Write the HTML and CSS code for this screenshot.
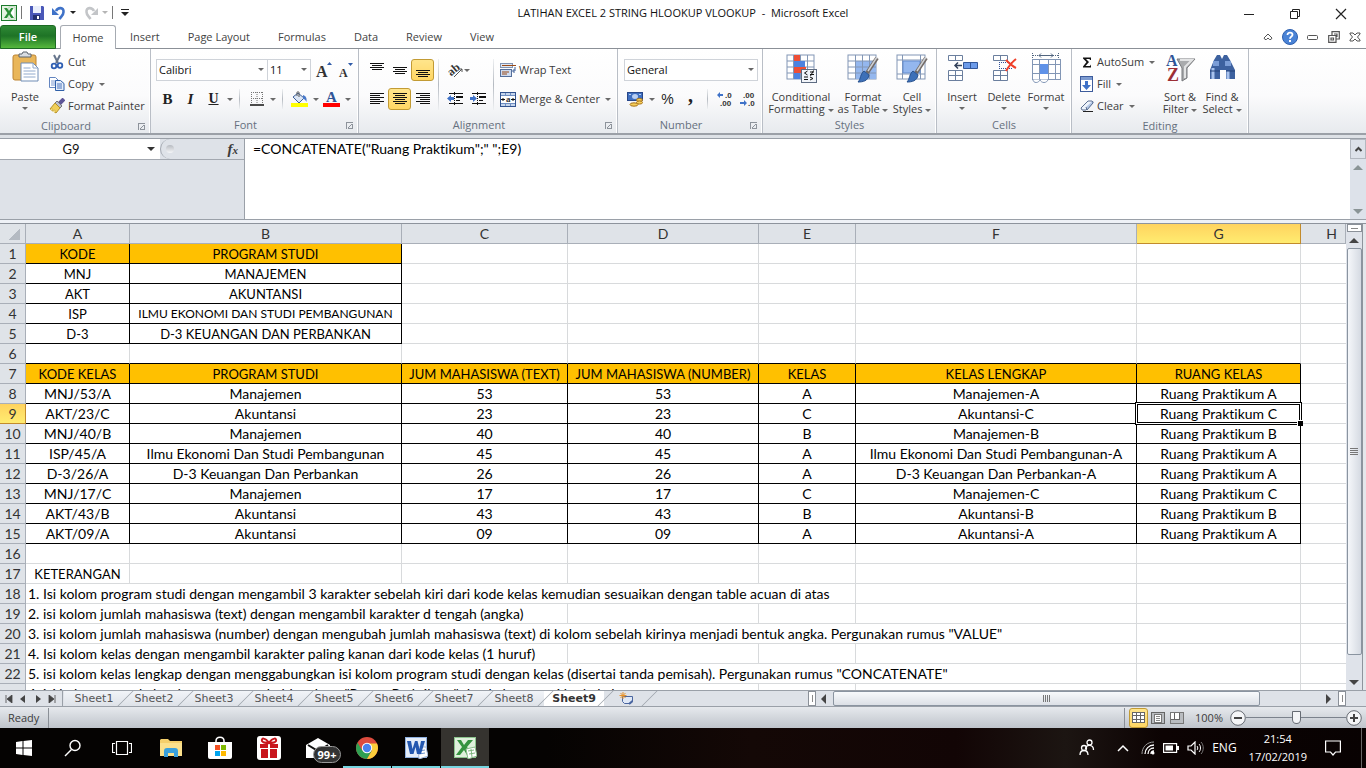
FILE: index.html
```html
<!DOCTYPE html>
<html lang="en">
<head>
<meta charset="utf-8">
<title>LATIHAN EXCEL 2 STRING HLOOKUP VLOOKUP - Microsoft Excel</title>
<link rel="stylesheet" href="styles.css">
</head>
<body>
<div class="app">

<header class="titlebar">
  <div class="quick">
    <svg class="qa-logo" width="16" height="16" viewBox="0 0 16 16"><rect x=".5" y=".5" width="15" height="15" fill="#e6f3e3" stroke="#1d7a2c"/><rect x="8" y="2" width="6" height="12" fill="#fff" stroke="#8fc191" stroke-width=".6"/><path d="M3 3h3l2 3 2-3h2.500L9.500 8l3.500 5h-3l-2-3.500L6 13H3l3.500-5z" fill="#2c8f38"/></svg>
    <i class="bar"></i>
    <button class="qa" aria-label="Save"><svg width="14" height="14" viewBox="0 0 14 14"><path d="M0 0h13l1 1v13H0z" fill="#4a58b8"/><rect x="3" y="0" width="8" height="7" fill="#e9eefb"/><rect x="3" y="9" width="7" height="5" fill="#23306f"/><rect x="7" y="10" width="2" height="3" fill="#fff"/></svg></button>
    <button class="qa" aria-label="Undo"><svg width="14" height="14" viewBox="0 0 14 14"><path d="M4 5C6 1 12 1 11.500 6c0 3-2 4-4 7" fill="none" stroke="#3f72c8" stroke-width="2.600"/><path d="M0 2v7h7z" fill="#3f72c8"/></svg></button>
    <i class="caret dark"></i>
    <button class="qa" aria-label="Redo"><svg width="14" height="14" viewBox="0 0 14 14"><path d="M10 5C8 1 2 1 2.500 6c0 3 2 4 4 7" fill="none" stroke="#c3c5c8" stroke-width="2.600"/><path d="M14 2v7H7z" fill="#c3c5c8"/></svg></button>
    <i class="caret pale"></i>
    <i class="bar"></i>
    <button class="qa-more" aria-label="Customize toolbar"><svg width="8" height="7" viewBox="0 0 8 7"><path d="M0 .5h8" stroke="#222"/><path d="M0 3h8L4 7z" fill="#222"/></svg></button>
  </div>
  <h1 class="title">LATIHAN EXCEL 2 STRING HLOOKUP VLOOKUP&nbsp; -&nbsp; Microsoft Excel</h1>
  <div class="win">
    <button aria-label="Minimize"><svg width="12" height="12" viewBox="0 0 12 12"><path d="M1 6.500h10" stroke="#222"/></svg></button>
    <button aria-label="Restore"><svg width="12" height="12" viewBox="0 0 12 12"><path d="M1.500 3.500h7v7h-7zM3.500 3V1.500h7v7H9" fill="none" stroke="#222"/></svg></button>
    <button aria-label="Close"><svg width="12" height="12" viewBox="0 0 12 12"><path d="M1 1l10 10M11 1L1 11" stroke="#222" stroke-width="1.200"/></svg></button>
  </div>
</header>

<nav class="tabs">
  <button class="tab file">File</button>
  <button class="tab home">Home</button>
  <button class="tab">Insert</button>
  <button class="tab">Page Layout</button>
  <button class="tab">Formulas</button>
  <button class="tab">Data</button>
  <button class="tab">Review</button>
  <button class="tab">View</button>
  <div class="tabs-right">
    <button aria-label="Collapse ribbon"><svg width="10" height="8" viewBox="0 0 10 8"><path d="M1 5l4-4 4 4-1 1.500H6.500L5 5 3.500 6.500H2z" fill="#fff" stroke="#555"/></svg></button>
    <button aria-label="Help"><svg width="16" height="16" viewBox="0 0 16 16"><circle cx="8" cy="8" r="7.500" fill="#4a83d6" stroke="#2d5fae"/><path d="M5.500 6c0-3.300 5-3 5-.2 0 1.700-2.500 1.700-2.500 4" fill="none" stroke="#fff" stroke-width="1.800"/><rect x="7" y="11" width="2" height="2" fill="#fff"/></svg></button>
    <button aria-label="Minimize workbook"><svg width="12" height="8" viewBox="0 0 12 8"><rect x=".5" y="2.500" width="10" height="4" rx="1" fill="#fff" stroke="#555"/></svg></button>
    <button aria-label="Restore workbook"><svg width="12" height="12" viewBox="0 0 12 12"><path d="M4 4V.7h7.300V8H8M.7 4.500H8v6.800H.7zM3 7h2.500v2H3zM6 3h3v3" fill="none" stroke="#555" stroke-width="1.200"/></svg></button>
    <button aria-label="Close workbook"><svg width="12" height="10" viewBox="0 0 12 10"><path d="M1 1h3l2 2 2-2h3v1L8.500 5 11 8v1H8L6 7 4 9H1V8l2.500-3L1 2z" fill="#fff" stroke="#555"/></svg></button>
  </div>
</nav>

<section class="ribbon">
  <div class="group g-clip">
    <div class="body">
      <button class="big"><svg width="28" height="32" viewBox="0 0 28 32"><rect x="2" y="4" width="23" height="25" rx="2" fill="#e9b65a" stroke="#bd8433"/><path d="M8 6V3h3l1-2h4l1 2h3v3z" fill="#d9dde2" stroke="#5d646d"/><path d="M10 12h12l5 5v13H10z" fill="#fff" stroke="#6f8cb5"/><path d="M22 12v5h5M12.500 17h7M12.500 20h12M12.500 23h12M12.500 26h12" fill="none" stroke="#90a9cc"/></svg><span>Paste</span><i class="caret"></i></button>
      <div class="col">
        <button class="row"><svg width="16" height="16" viewBox="0 0 16 16"><path d="M5 1l4 8M11 1L7 9" stroke="#66758c" stroke-width="2"/><circle cx="5" cy="12" r="2.300" fill="none" stroke="#2f5fb3" stroke-width="1.800"/><circle cx="11" cy="11.500" r="2.300" fill="none" stroke="#2f5fb3" stroke-width="1.800"/></svg>Cut</button>
        <button class="row"><svg width="16" height="16" viewBox="0 0 16 16"><path d="M.5 1.500h6l3 3v7h-9z" fill="#fff" stroke="#6385c0"/><path d="M2 5h5M2 7h4M2 9h4" stroke="#7c9ad0"/><path d="M6.500 4.500h5l3.500 3v7H6.500z" fill="#e5edf9" stroke="#2f5fa8"/><path d="M8 8h5M8 10h5M8 12h5" stroke="#4a75be"/></svg>Copy<i class="caret"></i></button>
        <button class="row"><svg width="16" height="16" viewBox="0 0 16 16"><path d="M15 1l-5 5" stroke="#5e5597" stroke-width="4"/><path d="M8 3l5 5-2 2-5-5z" fill="#b9bed0" stroke="#777"/><path d="M6 5l5 5-4 5-6-4z" fill="#f0cf59" stroke="#b28f2a"/><path d="M1 11l3 0-1 2 3-1 0 3" fill="#fff3a8" stroke="#caa53a" stroke-width=".6"/></svg>Format Painter</button>
      </div>
    </div>
    <div class="label">Clipboard<button class="launch" aria-label="Clipboard options"></button></div>
  </div>

  <div class="group g-font">
    <div class="body rows">
      <div class="line">
        <span class="combo c-font"><select aria-label="Font"><option>Calibri</option></select></span><span class="combo c-size"><select aria-label="Font size"><option>11</option></select></span>
        <button class="tool grow" aria-label="Grow font"><svg width="18" height="18" viewBox="0 0 18 18"><text x="1" y="16" class="serif" font-size="16">A</text><path d="M12 4l2.500-3L17 4z" fill="#2f5ba8"/></svg></button>
        <button class="tool grow" aria-label="Shrink font"><svg width="18" height="18" viewBox="0 0 18 18"><text x="3" y="16" class="serif" font-size="12">A</text><path d="M12 2h5l-2.500 3z" fill="#2f5ba8"/></svg></button>
      </div>
      <div class="line">
        <button class="tool serif-b">B</button><button class="tool serif-i">I</button><button class="tool serif-u">U</button><button class="drop" aria-label="Underline style"><i class="caret"></i></button><i class="sep"></i>
        <button class="tool" aria-label="Borders"><svg width="14" height="14" viewBox="0 0 14 14"><path d="M1.500 0v12M7 0v12M12.500 0v12M1 .5h12M1 6.500h12" stroke="#777" stroke-dasharray="1 1"/><path d="M0 13h14" stroke="#111" stroke-width="1.500"/></svg></button><button class="drop" aria-label="Border style"><i class="caret"></i></button><i class="sep"></i>
        <button class="tool wide" aria-label="Fill color"><svg width="17" height="16" viewBox="0 0 17 16"><path d="M2 6l5-4 6 5-5 5z" fill="#dbe5f4" stroke="#3d5f99"/><path d="M6 5V1.500c0-1 2-1 2 0V6" fill="none" stroke="#555"/><path d="M12 4c3 1 4 3 3.500 7-1-2-2-3-3.500-3z" fill="#4979c9"/><rect y="12" width="17" height="4" fill="#ff0"/></svg></button><button class="drop" aria-label="Fill palette"><i class="caret"></i></button>
        <button class="tool wide" aria-label="Font color"><svg width="17" height="16" viewBox="0 0 17 16"><text x="3" y="11" class="serif blue" font-size="15">A</text><rect y="12" width="17" height="4" fill="#f00"/></svg></button><button class="drop" aria-label="Font palette"><i class="caret"></i></button>
      </div>
    </div>
    <div class="label">Font<button class="launch" aria-label="Font options"></button></div>
  </div>

  <div class="group g-align">
    <div class="body">
      <div class="al-grid">
        <button class="tool" aria-label="Top align"><svg width="14" height="14" viewBox="0 0 14 14"><path d="M0 .5h14M2 2.500h10M0 4.500h14M2 6.500h10" stroke="#111"/></svg></button>
        <button class="tool" aria-label="Middle align"><svg width="14" height="14" viewBox="0 0 14 14"><path d="M0 4.500h14M2 6.500h10M0 8.500h14M2 10.500h10" stroke="#111"/></svg></button>
        <button class="tool on" aria-label="Bottom align"><svg width="14" height="14" viewBox="0 0 14 14"><path d="M0 7.500h14M2 9.500h10M0 11.500h14M2 13.500h10" stroke="#111"/></svg></button>
        <button class="tool" aria-label="Align left"><svg width="14" height="14" viewBox="0 0 14 14"><path d="M0 1.500h14M0 3.500h10M0 5.500h14M0 7.500h10M0 9.500h14M0 11.500h10" stroke="#111"/></svg></button>
        <button class="tool on" aria-label="Center"><svg width="14" height="14" viewBox="0 0 14 14"><path d="M0 1.500h14M2 3.500h10M0 5.500h14M2 7.500h10M0 9.500h14M2 11.500h10" stroke="#111"/></svg></button>
        <button class="tool" aria-label="Align right"><svg width="14" height="14" viewBox="0 0 14 14"><path d="M0 1.500h14M4 3.500h10M0 5.500h14M4 7.500h10M0 9.500h14M4 11.500h10" stroke="#111"/></svg></button>
      </div>
      <i class="sep tall"></i>
      <div class="al-mid">
        <button class="tool orient" aria-label="Orientation"><svg width="16" height="16" viewBox="0 0 16 16"><text x="0" y="12" class="serif" font-size="12" transform="rotate(-40 5 9)">ab</text><path d="M6 15L14 7M14 7h-3M14 7v3" stroke="#555" fill="none"/></svg><i class="caret"></i></button>
        <div class="indents">
          <button class="tool" aria-label="Decrease indent"><svg width="16" height="14" viewBox="0 0 16 14"><path d="M7.500 0v14" stroke="#111" stroke-dasharray="1 1"/><path d="M2 1.500h14M9 4.500h7M9 5.500h7M9 8.500h4M2 11.500h14" stroke="#111"/><path d="M0 6.500L4 3v2h3v3H4v2z" fill="#3f72c8"/></svg></button>
          <button class="tool" aria-label="Increase indent"><svg width="16" height="14" viewBox="0 0 16 14"><path d="M7.500 0v14" stroke="#111" stroke-dasharray="1 1"/><path d="M2 1.500h14M9 4.500h7M9 5.500h7M9 8.500h4M2 11.500h14" stroke="#111"/><path d="M7 6.500L3 3v2H0v3h3v2z" fill="#3f72c8"/></svg></button>
        </div>
      </div>
      <i class="sep tall"></i>
      <div class="al-wrap">
        <button class="row"><svg width="16" height="16" viewBox="0 0 16 16"><rect x=".5" y="1.500" width="12" height="4" fill="#dfe7f3" stroke="#8194b3"/><path d="M2 3.500h14" stroke="#9a4a18"/><rect x=".5" y="7.500" width="11" height="7" fill="#cfdcf0" stroke="#556f9c"/><path d="M2 10h7M2 12h5" stroke="#9a4a18"/><path d="M15 5v4h-2M14.500 7l-2 2 2 2" fill="none" stroke="#3d5f99"/></svg>Wrap Text</button>
        <button class="row"><svg width="16" height="15" viewBox="0 0 16 15"><rect x=".5" y=".5" width="15" height="14" fill="#6f8ec2" stroke="#32538f"/><path d="M1 1h4v2H1zM6 1h4v2H6zM11 1h4v2h-4zM1 12h4v2H1zM6 12h4v2H6zM11 12h4v2h-4z" fill="#c5d5ec"/><rect x="1" y="4" width="14" height="7" fill="#fff"/><path d="M1 7.500h4M11 7.500h4M3 6v3M13 6v3" stroke="#111"/><text x="6" y="10" class="serif" font-size="9">a</text></svg>Merge &amp; Center<i class="caret"></i></button>
      </div>
    </div>
    <div class="label">Alignment<button class="launch" aria-label="Alignment options"></button></div>
  </div>

  <div class="group g-num">
    <div class="body rows">
      <div class="line"><span class="combo c-num"><select aria-label="Number format"><option>General</option></select></span></div>
      <div class="line">
        <button class="tool" aria-label="Currency"><svg width="17" height="16" viewBox="0 0 17 16"><rect x=".5" y="1.500" width="15" height="8" fill="#3f6fc0" stroke="#28478a"/><ellipse cx="8" cy="5.500" rx="3" ry="2.500" fill="#b9cff2"/><path d="M2 3.500h2M12 3.500h2" stroke="#b9cff2"/><ellipse cx="12.500" cy="9" rx="3" ry="1.600" fill="#f5ce5a" stroke="#a9741b"/><ellipse cx="12.500" cy="11.500" rx="3" ry="1.600" fill="#f5ce5a" stroke="#a9741b"/><ellipse cx="7" cy="13.500" rx="4" ry="1.700" fill="#f5ce5a" stroke="#a9741b"/></svg></button><button class="drop" aria-label="Currency formats"><i class="caret"></i></button>
        <button class="tool pct">%</button><button class="tool comma">,</button><i class="sep"></i>
        <button class="tool" aria-label="Increase decimal"><svg width="18" height="14" viewBox="0 0 18 14"><text x="9" y="6" class="dec">.0</text><text x="4" y="14" class="dec">.00</text><path d="M1 3l3-3v2h3v2H4v2z" fill="#3f72c8"/></svg></button>
        <button class="tool" aria-label="Decrease decimal"><svg width="18" height="14" viewBox="0 0 18 14"><text x="4" y="6" class="dec">.00</text><text x="9" y="14" class="dec">.0</text><path d="M8 11L5 8v2H1v2h4v2z" fill="#3f72c8"/></svg></button>
      </div>
    </div>
    <div class="label">Number<button class="launch" aria-label="Number options"></button></div>
  </div>

  <div class="group g-styles">
    <div class="body">
      <button class="big b-cond"><svg width="32" height="32" viewBox="0 0 32 32"><rect x="2" y="4" width="27" height="24" fill="#fff" stroke="#8296b5"/><path d="M2 10h27M2 16h27M2 22h27M8.500 4v24M15.500 4v24M22.500 4v24" stroke="#8296b5"/><path d="M9 4h6v6H9zM9 16h12v6H9z" fill="#ee4e35"/><path d="M9 10h11v6H9zM9 22h6v6H9z" fill="#4c82e0"/><rect x="16.500" y="18.500" width="15" height="13" fill="#f2f5fa" stroke="#5e6c82"/><path d="M22.500 20l-3 2 3 2M19 26h4M25 21h4M25 23.500h4M28.500 19.500l-3 5.500M25 26l3 1.500-3 1.500M19 28.500h4" fill="none" stroke="#111"/></svg><span>Conditional<br>Formatting <i class="caret"></i></span></button>
      <button class="big b-fmt"><svg width="32" height="32" viewBox="0 0 32 32"><rect x="1" y="4" width="28" height="24" fill="#fff" stroke="#8296b5"/><path d="M8 10h21v18H8z" fill="#94b7ee"/><path d="M1 10h28M1 16h28M1 22h28M8.500 4v24M15.500 4v24M22.500 4v24" stroke="#8296b5"/><path d="M30 7L20 22" stroke="#736b67" stroke-width="4"/><path d="M30 6L21 20" stroke="#cfd2d6" stroke-width="1.500"/><path d="M17 20l5 4c-1 6-6 7-11 7 3-3 2-8 6-11z" fill="#3d70b8" stroke="#28528f"/></svg><span>Format<br>as Table <i class="caret"></i></span></button>
      <button class="big b-cell"><svg width="32" height="32" viewBox="0 0 32 32"><rect x="1" y="4" width="28" height="24" fill="#fff" stroke="#8296b5"/><path d="M1 9h28M1 23h28M6.500 4v24M24.500 4v24" stroke="#8296b5"/><path d="M7 10h17v12H7z" fill="#94b7ee" stroke="#648dce"/><path d="M30 7L20 22" stroke="#736b67" stroke-width="4"/><path d="M30 6L21 20" stroke="#cfd2d6" stroke-width="1.500"/><path d="M17 20l5 4c-1 6-6 7-11 7 3-3 2-8 6-11z" fill="#3d70b8" stroke="#28528f"/></svg><span>Cell<br>Styles <i class="caret"></i></span></button>
    </div>
    <div class="label">Styles</div>
  </div>

  <div class="group g-cells">
    <div class="body">
      <button class="big"><svg width="32" height="32" viewBox="0 0 32 32"><path d="M2.500 4.500h14v5h-14zM9.500 4.500v5M2.500 19.500h14v10h-14zM9.500 19.500v10M2.500 24.500h14" fill="#fff" stroke="#6b7f9e"/><path d="M17.500 11.500h14v6h-14zM24.500 11.500v6" fill="#6c9bea" stroke="#32579b"/><path d="M9 14.500h7M12 11.500l-3 3 3 3" fill="none" stroke="#33415a" stroke-width="1.500"/></svg><span>Insert</span><i class="caret"></i></button>
      <button class="big"><svg width="32" height="32" viewBox="0 0 32 32"><path d="M5.500 4.500h14v5h-14zM12.500 4.500v5M5.500 19.500h14v10h-14zM12.500 19.500v10M5.500 24.500h14" fill="#fff" stroke="#6b7f9e"/><path d="M11 11.500h14M11 17.500h14M11.500 11v7" stroke="#33539a" stroke-dasharray="1 1"/><path d="M18 9c3 3 6 6 10 8M28 8c-4 3-7 7-10 12" fill="none" stroke="#f0402a" stroke-width="2"/></svg><span>Delete</span><i class="caret"></i></button>
      <button class="big"><svg width="32" height="32" viewBox="0 0 32 32"><path d="M2.500 2v5M28.500 2v5M3 4.500h26" stroke="#51657f" stroke-dasharray="1 1"/><path d="M9 4.500h14M11 2.500l-2 2 2 2M21 2.500l2 2-2 2" fill="none" stroke="#51657f"/><rect x="2.500" y="8.500" width="28" height="20" fill="#fff" stroke="#8296b5"/><path d="M2 13.500h28M2 22.500h28M9.500 9v19M18.500 9v19M25.500 9v19" stroke="#8296b5"/><rect x="10" y="13" width="8" height="10" fill="#5f92e8"/><path d="M3 28.500c0 4 6 4 7 0 1 4 7 4 8 0" fill="#fff" stroke="#8296b5"/></svg><span>Format</span><i class="caret"></i></button>
    </div>
    <div class="label">Cells</div>
  </div>

  <div class="group g-edit">
    <div class="body">
      <div class="col">
        <button class="row"><svg width="14" height="16" viewBox="0 0 14 16"><path d="M3 3.500h8V6H10L9.500 5H6l3 3-3.500 4H10l1-1.500V13.500H3v-1L6.500 8 3 4.500z" fill="#111"/></svg>AutoSum<i class="caret"></i></button>
        <button class="row"><svg width="14" height="16" viewBox="0 0 14 16"><rect x=".5" y=".5" width="12" height="15" fill="#fff" stroke="#3d5c9c"/><rect x="1" y="1" width="11" height="3" fill="#7d9bd0"/><path d="M5 5h3v4h3l-4.500 5L2 9h3z" fill="#3f72c8"/></svg>Fill<i class="caret"></i></button>
        <button class="row"><svg width="14" height="16" viewBox="0 0 14 16"><path d="M1 10l7-7h4l1 2-7 7H2z" fill="#eef3fb" stroke="#5a6f92"/><path d="M6 9l1 3 6-7-.5-2" fill="#b6c9e8" stroke="#5a6f92"/><path d="M3 13.500h10" stroke="#222"/></svg>Clear<i class="caret"></i></button>
      </div>
      <button class="big"><svg width="32" height="32" viewBox="0 0 32 32"><path d="M13 8h18l-8 9v10l-5 3V17z" fill="#a9abad" stroke="#77797c"/><path d="M16 9h12l-7 7v11" fill="none" stroke="#e3e4e5" stroke-width="2"/><text x="2" y="15" class="serif blue" font-size="16">A</text><text x="3" y="30" class="serif red" font-size="18">Z</text></svg><span>Sort &amp;<br>Filter <i class="caret"></i></span></button>
      <button class="big"><svg width="32" height="32" viewBox="0 0 32 32"><path d="M8 9l3-5h3l2 4 2-4h3l3 5 5 10v9h-9v-9h-6v9H4v-9z" fill="#3d619f"/><path d="M7 10h6v5H7zM19 10h6v5h-6z" fill="#7b9dd6"/><path d="M7 17v11M22 20v8" stroke="#a9c3ee" stroke-width="3"/><path d="M4 20h10M20 20h9" stroke="#254379"/></svg><span>Find &amp;<br>Select <i class="caret"></i></span></button>
    </div>
    <div class="label">Editing</div>
  </div>
</section>

<section class="formula">
  <div class="fx-left">
    <div class="fx-top">
      <input class="namebox" aria-label="Name box" value="G9">
      <button class="name-drop" aria-label="Names"><i class="caret big-caret"></i></button>
      <div class="fx-tools"><i class="knob"></i><button class="fx" aria-label="Insert function"><em>f</em><sub>x</sub></button></div>
    </div>
  </div>
  <textarea class="fx-text" aria-label="Formula" spellcheck="false">=CONCATENATE("Ruang Praktikum";" ";E9)</textarea>
  <div class="fx-scroll">
    <button class="fx-exp" aria-label="Collapse formula bar"><svg width="7" height="6" viewBox="0 0 7 6"><path d="M.5 5l3-3 3 3" fill="none" stroke="#444" stroke-width="2"/></svg></button>
    <i class="tri up mute"></i><i class="fill"></i><i class="tri down mute"></i>
  </div>
</section>
<div class="divider"></div>

<main class="work">
  <div class="sheet">
    <table class="grid">
      <colgroup><col class="w-n"><col class="w-a"><col class="w-b"><col class="w-c"><col class="w-d"><col class="w-e"><col class="w-f"><col class="w-g"><col></colgroup>
      <thead><tr><th class="corner"></th><th>A</th><th>B</th><th>C</th><th>D</th><th>E</th><th>F</th><th class="sel">G</th><th class="last">H</th></tr></thead>
      <tbody>
        <tr class="b2 caps"><th>1</th><td class="h">KODE</td><td class="h">PROGRAM STUDI</td><td></td><td></td><td></td><td></td><td></td><td></td></tr>
        <tr class="b2 caps"><th>2</th><td>MNJ</td><td>MANAJEMEN</td><td></td><td></td><td></td><td></td><td></td><td></td></tr>
        <tr class="b2 caps"><th>3</th><td>AKT</td><td>AKUNTANSI</td><td></td><td></td><td></td><td></td><td></td><td></td></tr>
        <tr class="b2 caps"><th>4</th><td>ISP</td><td class="long">ILMU EKONOMI DAN STUDI PEMBANGUNAN</td><td></td><td></td><td></td><td></td><td></td><td></td></tr>
        <tr class="b2 caps"><th>5</th><td>D-3</td><td>D-3 KEUANGAN DAN PERBANKAN</td><td></td><td></td><td></td><td></td><td></td><td></td></tr>
        <tr class="pre"><th>6</th><td></td><td></td><td></td><td></td><td></td><td></td><td></td><td></td></tr>
        <tr class="b7 head caps"><th>7</th><td>KODE KELAS</td><td>PROGRAM STUDI</td><td>JUM MAHASISWA (TEXT)</td><td>JUM MAHASISWA (NUMBER)</td><td>KELAS</td><td>KELAS LENGKAP</td><td>RUANG KELAS</td><td></td></tr>
        <tr class="b7"><th>8</th><td>MNJ/53/A</td><td>Manajemen</td><td>53</td><td>53</td><td>A</td><td>Manajemen-A</td><td>Ruang Praktikum A</td><td></td></tr>
        <tr class="b7"><th class="sel">9</th><td>AKT/23/C</td><td>Akuntansi</td><td>23</td><td>23</td><td>C</td><td>Akuntansi-C</td><td class="active">Ruang Praktikum C</td><td></td></tr>
        <tr class="b7"><th>10</th><td>MNJ/40/B</td><td>Manajemen</td><td>40</td><td>40</td><td>B</td><td>Manajemen-B</td><td>Ruang Praktikum B</td><td></td></tr>
        <tr class="b7"><th>11</th><td>ISP/45/A</td><td>Ilmu Ekonomi Dan Studi Pembangunan</td><td>45</td><td>45</td><td>A</td><td>Ilmu Ekonomi Dan Studi Pembangunan-A</td><td>Ruang Praktikum A</td><td></td></tr>
        <tr class="b7"><th>12</th><td>D-3/26/A</td><td>D-3 Keuangan Dan Perbankan</td><td>26</td><td>26</td><td>A</td><td>D-3 Keuangan Dan Perbankan-A</td><td>Ruang Praktikum A</td><td></td></tr>
        <tr class="b7"><th>13</th><td>MNJ/17/C</td><td>Manajemen</td><td>17</td><td>17</td><td>C</td><td>Manajemen-C</td><td>Ruang Praktikum C</td><td></td></tr>
        <tr class="b7"><th>14</th><td>AKT/43/B</td><td>Akuntansi</td><td>43</td><td>43</td><td>B</td><td>Akuntansi-B</td><td>Ruang Praktikum B</td><td></td></tr>
        <tr class="b7"><th>15</th><td>AKT/09/A</td><td>Akuntansi</td><td>09</td><td>09</td><td>A</td><td>Akuntansi-A</td><td>Ruang Praktikum A</td><td></td></tr>
        <tr><th>16</th><td></td><td></td><td></td><td></td><td></td><td></td><td></td><td></td></tr>
        <tr class="caps"><th>17</th><td>KETERANGAN</td><td></td><td></td><td></td><td></td><td></td><td></td><td></td></tr>
        <tr><th>18</th><td colspan="5" class="note">1. Isi kolom program studi dengan mengambil 3 karakter sebelah kiri dari kode kelas kemudian sesuaikan dengan table acuan di atas</td><td></td><td></td><td></td></tr>
        <tr><th>19</th><td colspan="3" class="note">2. isi kolom jumlah mahasiswa (text) dengan mengambil karakter d tengah (angka)</td><td></td><td></td><td></td><td></td><td></td></tr>
        <tr><th>20</th><td colspan="6" class="note">3. isi kolom jumlah mahasiswa (number) dengan mengubah jumlah mahasiswa (text) di kolom sebelah kirinya menjadi bentuk angka. Pergunakan rumus "VALUE"</td><td></td><td></td></tr>
        <tr><th>21</th><td colspan="3" class="note">4. Isi kolom kelas dengan mengambil karakter paling kanan dari kode kelas (1 huruf)</td><td></td><td></td><td></td><td></td><td></td></tr>
        <tr><th>22</th><td colspan="6" class="note">5. isi kolom kelas lengkap dengan menggabungkan isi kolom program studi dengan kelas (disertai tanda pemisah). Pergunakan rumus "CONCATENATE"</td><td></td><td></td></tr>
        <tr><th></th><td colspan="4" class="note">6. isi kolom ruang kelas dengan menambahkan kata "Ruang Praktikum" dan kelas sesuai kode kelas</td><td></td><td></td><td></td><td></td></tr>
      </tbody>
    </table>
  </div>
  <div class="vscroll">
    <i class="split-h"></i><i class="tri up"></i><i class="thumb-v"></i><i class="tri down"></i>
  </div>
</main>

<div class="bottom">
  <div class="navs">
    <button aria-label="First sheet"><svg width="8" height="8" viewBox="0 0 8 8"><path d="M1 0v8M7 0v8L2 4z" fill="#444" stroke="#444" stroke-width=".8"/></svg></button>
    <button aria-label="Previous sheet"><svg width="8" height="8" viewBox="0 0 8 8"><path d="M6 0v8L1 4z" fill="#444"/></svg></button>
    <button aria-label="Next sheet"><svg width="8" height="8" viewBox="0 0 8 8"><path d="M2 0v8l5-4z" fill="#444"/></svg></button>
    <button aria-label="Last sheet"><svg width="8" height="8" viewBox="0 0 8 8"><path d="M7 0v8M1 0v8l5-4z" fill="#444" stroke="#444" stroke-width=".8"/></svg></button>
  </div>
  <div class="stabs">
    <button>Sheet1</button><button>Sheet2</button><button>Sheet3</button><button>Sheet4</button><button>Sheet5</button><button>Sheet6</button><button>Sheet7</button><button>Sheet8</button><button class="cur">Sheet9</button>
    <button class="new" aria-label="Insert worksheet"><svg width="14" height="13" viewBox="0 0 14 13"><path d="M3.500 4.500h10v5l-2 2h-6l-2-2z" fill="#dfe8f6" stroke="#4a66a0"/><path d="M10 12l3.500-3" stroke="#4a66a0" stroke-width="2"/><path d="M4 0v7M.5 3.500h7M1.500 1l5 5M6.500 1l-5 5" stroke="#e8932a"/></svg></button>
  </div>
  <div class="hscroll">
    <i class="split-v"></i><i class="tri left"></i>
    <i class="thumb-h"></i><i class="fill"></i>
    <i class="tri right"></i><i class="split-v"></i>
  </div>
  <i class="bend"></i>
</div>

<footer class="status">
  <span class="ready">Ready</span><i class="fill"></i>
  <div class="views">
    <button class="on" aria-label="Normal"><svg width="13" height="11" viewBox="0 0 13 11"><rect x=".5" y=".5" width="12" height="10" fill="#fff" stroke="#666"/><path d="M0 3.500h13M0 7.500h13M4.500 0v11M8.500 0v11" stroke="#666"/></svg></button>
    <button aria-label="Page layout"><svg width="14" height="12" viewBox="0 0 14 12"><rect x=".5" y=".5" width="13" height="11" fill="#b9bcc0" stroke="#666"/><rect x="3.500" y="2.500" width="7" height="8" fill="#fff" stroke="#777"/><path d="M5 4.500h4M5 6.500h4M5 8.500h4" stroke="#888"/></svg></button>
    <button aria-label="Page break"><svg width="14" height="12" viewBox="0 0 14 12"><rect x=".5" y=".5" width="13" height="11" fill="#b9bcc0" stroke="#777"/><path d="M1 1h3v6H1zM5 1h4v6H5z" fill="#fff"/><path d="M4.500 1v6.500M9.500 1v6.500M1 7.500h9" stroke="#666"/></svg></button>
  </div>
  <span class="pct100">100%</span>
  <button class="zoom" aria-label="Zoom out"><svg width="16" height="16" viewBox="0 0 16 16"><circle cx="8" cy="8" r="7.300" fill="#f4f5f7" stroke="#666b73"/><path d="M4 8h8" stroke="#444" stroke-width="2"/></svg></button>
  <input class="range" type="range" aria-label="Zoom" min="0" max="200" value="100">
  <button class="zoom" aria-label="Zoom in"><svg width="16" height="16" viewBox="0 0 16 16"><circle cx="8" cy="8" r="7.300" fill="#f4f5f7" stroke="#666b73"/><path d="M4 8h8M8 4v8" stroke="#444" stroke-width="2"/></svg></button>
</footer>

<div class="taskbar">
  <button class="tk" aria-label="Start"><svg width="16" height="16" viewBox="0 0 16 16"><path d="M0 2l6.500-1v6.500H0zM7.500.900L16 0v7.500H7.500zM0 8.500h6.500V15L0 14zM7.500 8.500H16V16l-8.500-1z" fill="#fff"/></svg></button>
  <button class="tk" aria-label="Search"><svg width="18" height="18" viewBox="0 0 18 18"><circle cx="11" cy="6.500" r="5" fill="none" stroke="#fff" stroke-width="1.400"/><path d="M7.500 10.500L1 17" stroke="#fff" stroke-width="1.400"/></svg></button>
  <button class="tk" aria-label="Task view"><svg width="20" height="16" viewBox="0 0 20 16"><path d="M4.500 1.500h11v13h-11zM3 3.500H.5v9H3M17 3.500h2.500v9H17" fill="none" stroke="#fff" stroke-width="1.200"/></svg></button>
  <button class="tk" aria-label="File Explorer"><svg width="22" height="20" viewBox="0 0 22 20"><path d="M0 2l1-1h7l2 2h12v15H0z" fill="#f5cf6b"/><path d="M0 5h22v13H0z" fill="#fbe08c"/><path d="M4 19v-6c0-2 1-3 3-3h8c2 0 3 1 3 3v6h-4v-4H8v4z" fill="#3aa0dc"/></svg></button>
  <button class="tk" aria-label="Store"><svg width="24" height="24" viewBox="0 0 24 24"><path d="M8 8V5c0-5 8-5 8 0v3" fill="none" stroke="#fff" stroke-width="1.500"/><path d="M0 6h24v15q0 2-2 2H2q-2 0-2-2z" fill="#fff"/><path d="M7 9h5v5H7z" fill="#f25022"/><path d="M13 9h5v5h-5z" fill="#7fba00"/><path d="M7 15h5v5H7z" fill="#00a4ef"/><path d="M13 15h5v5h-5z" fill="#ffb900"/></svg></button>
  <button class="tk" aria-label="Gift"><svg width="24" height="24" viewBox="0 0 24 24"><rect width="24" height="24" rx="3" fill="#fff"/><path d="M3 8h8v4H3zM13 8h8v4h-8zM4 13h7v9H4zM13 13h7v9h-7z" fill="#c8161d"/><path d="M12 7C8 1 4 2 5 5c1 2 4 2 7 2 3 0 6 0 7-2 1-3-3-4-7 2z" fill="none" stroke="#c8161d" stroke-width="2"/></svg></button>
  <button class="tk mail" aria-label="Mail"><svg width="24" height="20" viewBox="0 0 24 20"><path d="M0 7l12-7 12 7v13H0z" fill="#fff"/><path d="M2 7l10 6 10-6" fill="none" stroke="#111" stroke-width="2"/></svg><span class="badge">99+</span></button>
  <button class="tk run" aria-label="Chrome"><svg width="24" height="24" viewBox="0 0 24 24"><circle cx="12" cy="12" r="11" fill="#dd4b3e"/><path d="M2.500 6.500A11 11 0 0 0 12 23l5-8.500H7.200z" fill="#2fa052"/><path d="M12 23a11 11 0 0 0 10-15.500H12l5 7z" fill="#fccd3b"/><circle cx="12" cy="12" r="5.200" fill="#fff"/><circle cx="12" cy="12" r="4.200" fill="#4a82ee"/></svg></button>
  <button class="tk run" aria-label="Word"><svg width="23" height="22" viewBox="0 0 23 22"><rect x=".5" y=".5" width="21" height="20" fill="#e4edf9" stroke="#8eb0e0"/><path d="M13 10h8l2 9-9 3z" fill="#fff" stroke="#a3b8d8"/><path d="M14 14l6-1M14 17l6-1" stroke="#6d92cc"/><path d="M2 4h4l1.500 8L10 4h2.500l2 8L16 4h4l-4 13h-4L10.500 10 8.500 17H5z" fill="#2458b0"/></svg></button>
  <button class="tk run now" aria-label="Excel"><svg width="23" height="22" viewBox="0 0 23 22"><rect x=".5" y=".5" width="21" height="20" fill="#dff0dc" stroke="#8cc58d"/><path d="M3 3h4l3 5 4-5h5l-6 7 5 8h-5l-3-5-4 5H2l6-8z" fill="#35933f"/><path d="M12 12l9-2 2 9-9 3z" fill="#fff" stroke="#8bbd8c"/><path d="M14 14l6-1M15 17l6-1M17 12l1 8" stroke="#7cb57e"/></svg></button>
  <i class="fill"></i>
  <div class="tray">
    <svg width="16" height="18" viewBox="0 0 16 18"><g fill="none" stroke="#fff" stroke-width="1.300"><circle cx="10.500" cy="3.500" r="2.500"/><path d="M6.500 10c0-5 8-5 8 1"/><circle cx="5" cy="9" r="2.500"/><path d="M1 16c0-6 8-6 8 0"/></g></svg>
    <svg width="12" height="8" viewBox="0 0 12 8"><path d="M1 7l5-5 5 5" fill="none" stroke="#fff" stroke-width="1.500"/></svg>
    <svg width="14" height="14" viewBox="0 0 14 14"><g fill="none" stroke="#fff"><path d="M1 13C1 6 6 1 13 1" stroke="#999"/><path d="M4 13c0-5 4-9 9-9M7 13c0-3.500 2.500-6 6-6M10 13c0-2 1-3 3-3" stroke-width="1.300"/></g><circle cx="12" cy="12" r="1.500" fill="#fff"/></svg>
    <svg width="16" height="10" viewBox="0 0 16 10"><path d="M.6.600h13v8.800H.6z" fill="none" stroke="#fff" stroke-width="1.200"/><path d="M2.500 2.500H10v5H2.500zM14 3h2v4h-2z" fill="#fff"/></svg>
    <svg width="17" height="14" viewBox="0 0 17 14"><path d="M1 5h3l4-4v12L4 9H1z" fill="none" stroke="#fff" stroke-width="1.200"/><path d="M10 5c1 1 1 3 0 4M12 3c2 2 2 6 0 8" fill="none" stroke="#fff"/><path d="M14 1c3 3 3 9 0 12" fill="none" stroke="#777"/></svg>
    <span class="lang">ENG</span>
    <div class="clock"><span>21:54</span><span>17/02/2019</span></div>
    <svg width="16" height="17" viewBox="0 0 16 17"><path d="M.6 1h14.800v11H10.500L8 15l-2.500-3H.6z" fill="none" stroke="#fff" stroke-width="1.200"/></svg>
    <i class="desk"></i>
  </div>
</div>
</div>
</body>
</html>
```
FILE: styles.css
```css
* { box-sizing: border-box; }
body { margin: 0; font: 11px/16px "Open Sans", "Noto Sans", sans-serif; color: #3b3b3b; }
button { border: 0; padding: 0; margin: 0; background: none; font: inherit; color: inherit; display: flex; align-items: center; justify-content: center; }
svg { display: block; flex: none; }
i { font-style: normal; flex: none; }
.app { display: flex; flex-direction: column; height: 100vh; min-width: 1300px; overflow: hidden; background: #fff; }
.fill { flex: 1; }

.caret { display: inline-block; border: 3px solid transparent; border-top-color: #6a6a6a; border-bottom: 0; }
.caret.dark { border-top-color: #222; }
.caret.pale { border-top-color: #b5b5b5; }
.caret.big-caret { border-width: 4px 4px 0; border-top-color: #333; }

/* title bar */
.titlebar { display: grid; grid-template-columns: 1fr auto 1fr; align-items: center; height: 25px; flex: none; }
.quick { display: flex; align-items: center; gap: 4px; padding-left: 1px; height: 22px; }
.bar { width: 1px; height: 13px; background: #777; }
.qa, .qa-more { margin-left: 4px; }
.title { margin: 0; font: inherit; color: #111; }
.win { display: flex; justify-content: flex-end; padding-right: 2px; }
.win button { width: 46px; height: 25px; padding-top: 3px; }

/* ribbon tabs */
.tabs { display: flex; height: 24px; flex: none; border-bottom: 1px solid #8b9097; }
.tab { padding: 0 14px; height: 24px; color: #444; }
.tab.file { width: 56px; color: #fff; font-weight: 600; background: linear-gradient(#2f8a35, #1e7326 45%, #55b83d); border-radius: 3px 3px 0 0; border: 1px solid #1d6a24; margin-right: 4px; }
.tab.home { width: 56px; padding: 0; background: #fff; border: 1px solid #a6abb2; border-bottom: 0; border-radius: 3px 3px 0 0; }
.tabs-right { margin-left: auto; display: flex; align-items: center; gap: 9px; padding-right: 5px; }

/* ribbon */
.ribbon { display: flex; height: 86px; flex: none; background: linear-gradient(#fff, #fbfbfc 55%, #e7eaee); border-bottom: 2px solid #9ba0a7; }
.group { display: flex; flex-direction: column; border-right: 1px solid #b9bec6; box-shadow: inset -1px 0 #fff; }
.g-clip { width: 151px; }
.g-font { width: 208px; }
.g-align { width: 259px; }
.g-num { width: 145px; }
.g-styles { width: 174px; }
.g-cells { width: 135px; }
.g-edit { width: 177px; }
.body { display: flex; height: 69px; padding: 2px 0 0 3px; }
.label { position: relative; text-align: center; padding: 1px 18px 0 0; color: #66707e; }
.g-styles .label, .g-cells .label, .g-edit .label { padding-right: 0; }
.launch { position: absolute; right: 5px; top: 6px; width: 7px; height: 7px; border: solid #8d939b; border-width: 1px 0 0 1px; align-items: flex-end; justify-content: flex-end; }
.launch::after { content: ""; width: 4px; height: 4px; border: solid #8d939b; border-width: 0 1px 1px 0; background: linear-gradient(135deg, transparent 40%, #8d939b 40% 60%, transparent 60%); }

.big { flex-direction: column; justify-content: flex-start; width: 44px; line-height: 12px; text-align: center; }
.big span { margin-top: 8px; white-space: nowrap; }
.big > .caret { margin-top: 4px; }
.big span .caret { vertical-align: middle; }
.col { display: flex; flex-direction: column; padding-left: 2px; }
.row { height: 22px; gap: 3px; justify-content: flex-start; white-space: nowrap; }
.row .caret { margin-left: 2px; }

.rows { flex-direction: column; padding: 10px 0 0 5px; gap: 7px; }
.line { display: flex; align-items: center; height: 22px; }
.tool { width: 23px; height: 22px; flex: none; }
.tool.grow { width: 21px; }
.line .combo + .tool { margin-left: 2px; }
.drop { width: 9px; height: 22px; flex: none; }
.sep { width: 1px; height: 20px; margin: 0 5px; background: linear-gradient(#eef0f2, #b5bac1, #eef0f2); }
.on { background: linear-gradient(#ffe58c, #ffd664); border: 1px solid #c29b34; border-radius: 3px; }
.combo { position: relative; display: block; height: 22px; }
.combo::after { content: ""; position: absolute; right: 4px; top: 9px; border: 3px solid transparent; border-top-color: #666; border-bottom: 0; pointer-events: none; }
.combo select { width: 100%; height: 100%; appearance: none; border: 1px solid #cfd3d9; border-radius: 0; background: #fff; padding: 0 2px; font: inherit; color: #111; }
.c-font { width: 112px; }
.c-size { width: 44px; margin-left: -1px; }
.c-num { width: 134px; }

.serif { font-family: "Liberation Serif", serif; font-weight: 700; fill: #333; }
.serif.blue { fill: #2f5597; }
.serif.red { fill: #9c2f35; }
.serif-b { font: 700 15px "Liberation Serif", serif; color: #222; }
.serif-i { font: italic 700 15px "Liberation Serif", serif; color: #222; }
.serif-u { font: 700 14px "Liberation Serif", serif; color: #222; text-decoration: underline; }
.dec { font: 700 8px "Liberation Sans", sans-serif; fill: #333; }
.pct { font: 14px "Liberation Sans", sans-serif; color: #222; }
.comma { font: 700 20px/12px "Liberation Serif", serif; color: #222; padding-bottom: 8px; }

.g-align .body { padding: 10px 0 0 6px; }
.al-grid { display: grid; grid-template-columns: repeat(3, 23px); row-gap: 7px; height: 51px; }
.sep.tall { height: 51px; margin: 0 4px; }
.al-mid { display: flex; flex-direction: column; gap: 7px; }
.tool.orient { width: 32px; }
.indents { display: flex; }
.al-wrap { display: flex; flex-direction: column; gap: 7px; padding-left: 2px; }
.g-num .rows { padding-left: 6px; }

.g-styles .body { padding-left: 4px; }
.b-cond { width: 68px; }
.b-fmt { width: 56px; }
.b-cell { width: 42px; }
.g-cells .body { padding-left: 4px; }
.g-cells .big { width: 42px; }
.g-edit .body { padding-left: 6px; }
.g-edit .col { width: 81px; }
.g-edit .big { width: 42px; }

/* formula bar */
.formula { display: flex; height: 82px; flex: none; margin-top: 3px; border: solid #9aa0a8; border-width: 1px 0; position: relative; box-shadow: 0 -3px #dde1e6; }
.divider { height: 4px; flex: none; background: #eef1f6; border-bottom: 1px solid #8d939c; }
.fx-left { width: 245px; background: #dee2e8; border-right: 1px solid #9aa0a8; }
.fx-top { display: flex; height: 21px; border-bottom: 1px solid #a3a8b0; }
.namebox { width: 142px; border: 0; background: #fff; text-align: center; padding: 0; font: 13px Lato, sans-serif; color: #111; }
.name-drop { width: 18px; background: #fff; }
.fx-tools { flex: 1; display: flex; align-items: center; justify-content: space-between; padding: 0 6px 0 5px; border-left: 1px solid #a3a8b0; border-radius: 10px 0 0 10px; }
.knob { width: 8px; height: 8px; border-radius: 4px; background: linear-gradient(#b7bbc1, #f5f6f8); }
.fx { font: 700 15px/18px "Liberation Serif", serif; align-items: baseline; }
.fx sub { font-size: 11px; font-style: italic; line-height: 12px; }
.fx-text { flex: 1; border: 0; resize: none; padding: 1px 8px; font: 14px/18px Lato, sans-serif; font-variant-ligatures: none; color: #000; overflow: hidden; outline: 0; }
.fx-scroll { width: 16px; background: #dde2ea; display: flex; flex-direction: column; align-items: center; padding-bottom: 5px; }
.fx-exp { width: 16px; height: 20px; border: 1px solid #b3b8c0; margin-bottom: 6px; }
.tri { width: 0; height: 0; border: 5px solid transparent; }
.tri.up { border-top: 0; border-bottom-color: #444; }
.tri.down { border-bottom: 0; border-top-color: #444; }
.tri.left { border-left: 0; border-right-color: #444; }
.tri.right { border-right: 0; border-left-color: #444; }
.tri.up.mute { border-bottom-color: #8a9496; }
.tri.down.mute { border-top-color: #8a9496; }

/* worksheet */
.work { flex: 1; min-height: 0; display: flex; }
.sheet { flex: 1; min-width: 0; overflow: hidden; }
.grid { table-layout: fixed; width: 100%; border-collapse: separate; border-spacing: 0; font: 14px/18px Lato, sans-serif; font-variant-ligatures: none; color: #000; }
.w-n { width: 26px; }
.w-a { width: 104px; }
.w-b { width: 272px; }
.w-c { width: 166px; }
.w-d { width: 191px; }
.w-e { width: 97px; }
.w-f { width: 281px; }
.w-g { width: 164px; }
.grid th, .grid td { height: 20px; padding: 0; border: solid #d8dadc; border-width: 0 1px 1px 0; text-align: center; white-space: nowrap; font-weight: 400; }
.grid th { background: #dfe3e8; border-color: #a9afb8; color: #333; }
.grid .caps td { font-size: 13px; }
.grid .caps .long { font-size: 12px; }
.grid thead .last { text-align: right; padding-right: 8px; }
.grid .corner { background: linear-gradient(135deg, #dfe3e8 50%, #b4bac2 50%) 9px 5px / 11px 11px no-repeat #dfe3e8; }
.grid th.sel { background: linear-gradient(#ffd35f, #ffec70); border-color: #c28b2c; }
.grid td:last-child { border-right: 0; }
.b2 td:nth-child(-n+3), .b7 td:not(:last-child) { border-color: #000; }
.pre td:not(:last-child) { border-bottom-color: #000; }
.grid .h, .head td:not(:last-child) { background: #ffc000; }
.grid .note { text-align: left; padding-left: 2px; }
.grid .active { position: relative; }
.active::before { content: ""; position: absolute; inset: -2px; border: 1px solid #000; box-shadow: inset 0 0 0 1px #fff, inset 0 0 0 2px #000; }
.active::after { content: ""; position: absolute; right: -3px; bottom: -3px; width: 5px; height: 5px; background: #000; border: solid #fff; border-width: 1px 0 0 1px; }
.vscroll { width: 20px; display: flex; flex-direction: column; align-items: center; padding: 0 4px 5px 0; background: linear-gradient(90deg, #dfe3ea 16px, #8e949c 16px, #8e949c 17px, #e4e7eb 17px); }
.split-h { width: 15px; height: 8px; border: 1px solid #8a9098; background: linear-gradient(#888, #888) center / 7px 1px no-repeat #fff; margin-bottom: 6px; }
.thumb-v { flex: 1; width: 15px; margin: 5px 0 25px; border: 1px solid #8a94a0; border-radius: 2px; background: repeating-linear-gradient(#777 0 1px, transparent 1px 2px) center / 8px 7px no-repeat, linear-gradient(90deg, #f5f7fa, #d5dae2); }

/* sheet tabs */
.bottom { display: flex; height: 17px; flex: none; background: #dee2e8; border: solid #9aa0a8; border-width: 1px 0; }
.navs { display: flex; width: 63px; align-items: center; justify-content: space-between; padding: 0 6px 0 5px; border-right: 1px solid #9aa0a8; }
.stabs { display: flex; padding-left: 1px; }
.stabs button { position: relative; width: 60px; font: 11px/14px "DejaVu Sans", sans-serif; color: #555; background: linear-gradient(#f1f4f8, #dee2e8); }
.stabs button::after { content: ""; position: absolute; right: -2px; top: 0; width: 1px; height: 15px; background: #9aa0a8; transform: skewX(-45deg); z-index: 1; }
.stabs .cur { background: #fff; color: #333; font-weight: 700; }
.stabs .new { width: 44px; background: none; }
.hscroll { flex: 1; display: flex; align-items: center; margin-left: 160px; }
.split-v { width: 8px; height: 15px; border: 1px solid #8a9098; background: linear-gradient(#888, #888) center / 1px 7px no-repeat #fff; }
.tri.left { margin: 0 7px 0 5px; }
.tri.right { margin: 0 7px 0 5px; }
.thumb-h { flex: 7; height: 15px; border: 1px solid #8a94a0; border-radius: 2px; background: repeating-linear-gradient(90deg, #777 0 1px, transparent 1px 2px) center / 7px 7px no-repeat, linear-gradient(#f8fafc, #dce0e6); }
.bend { width: 20px; }

/* status bar */
.status { display: flex; align-items: center; height: 21px; flex: none; background: linear-gradient(#e6e9ed, #bfc4cb); padding-right: 4px; }
.ready { padding: 0 9px 0 8px; line-height: 20px; border-right: 1px solid #8a8f96; }
.views { display: flex; padding-left: 4px; border-left: 1px solid #8a8f96; }
.views button { width: 19px; height: 20px; }
.pct100 { padding: 0 7px 0 9px; }
.range { appearance: none; width: 100px; height: 16px; margin: 0; background: linear-gradient(#7b828c, #7b828c) center / 100% 1px no-repeat; }
.range::-webkit-slider-thumb { appearance: none; width: 9px; height: 13px; background: #f4f5f7; border: 1px solid #666b73; border-radius: 1px 1px 5px 5px; }

/* taskbar */
.taskbar { display: flex; height: 40px; flex: none; gap: 1px; background: linear-gradient(90deg, #050302 0 40%, #140806 55%, #120505 70%, #1c1512 78%, #0c0303 85%, #080202); color: #fff; }
.tk { position: relative; width: 48px; height: 40px; flex: none; }
.tk.run { border-bottom: 2px solid #76d5e0; padding-top: 2px; }
.tk.now { background: #35332f; }
.badge { position: absolute; left: 19px; top: 18px; width: 28px; height: 17px; border: 1px solid #999; border-radius: 9px; background: #333; font: 700 11px/15px "Open Sans", sans-serif; text-align: center; }
.tray { display: flex; align-items: center; gap: 8px; }
.tray svg:nth-child(1) { margin-right: 14px; }
.tray svg:nth-child(2) { margin-right: 4px; }
.lang { font-size: 12px; }
.clock { display: flex; flex-direction: column; align-items: center; line-height: 18px; margin: 0 10px 0 4px; }
.desk { width: 5px; height: 40px; border-left: 1px solid #666; margin-left: 12px; }
```
